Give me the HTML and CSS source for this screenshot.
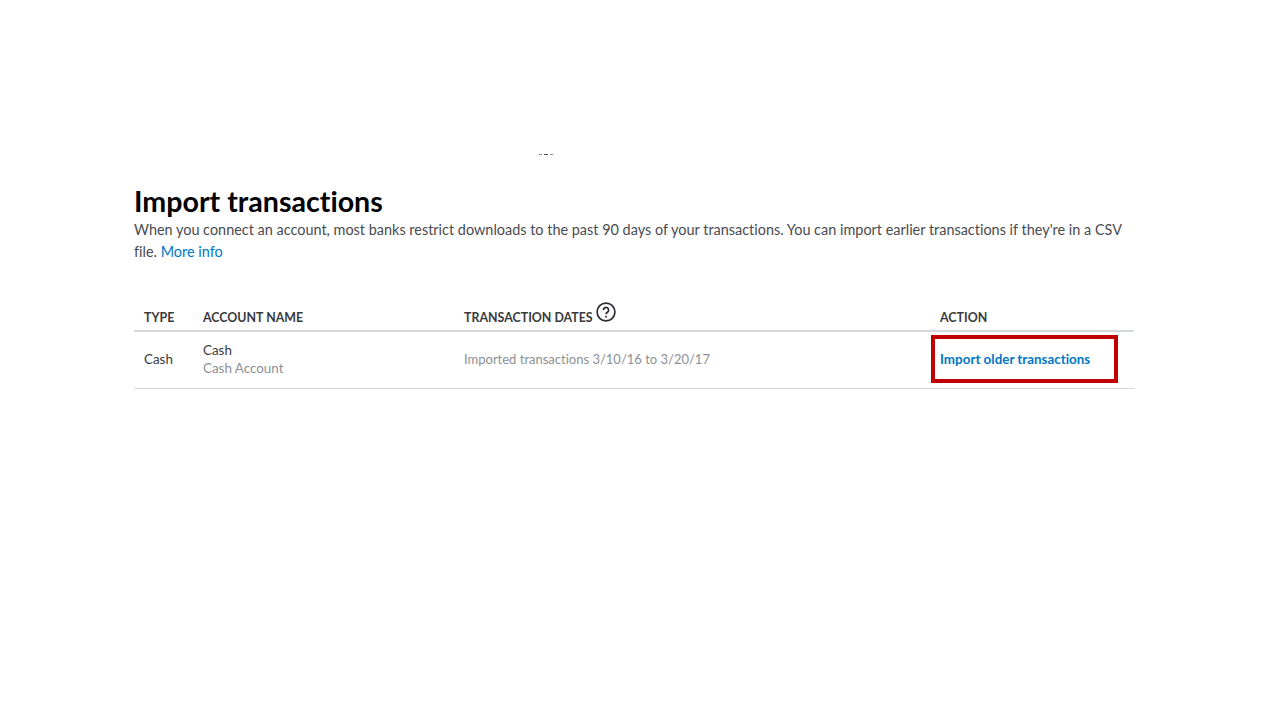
FILE: index.html
```html
<!DOCTYPE html>
<html lang="en">
<head>
<meta charset="utf-8">
<title>Import transactions</title>
<link rel="stylesheet" href="styles.css">
</head>
<body>
<main class="page">
  <div class="clipped" aria-hidden="true"><i class="tick"></i><i class="tick wide"></i><i class="tick"></i></div>
  <h1 class="title">Import transactions</h1>
  <p class="intro">When you connect an account, most banks restrict downloads to the past 90 days of your transactions. You can import earlier transactions if they're in a CSV file. <a class="link" href="#">More info</a></p>
  <div class="table">
    <div class="row head">
      <div class="cell">TYPE</div>
      <div class="cell">ACCOUNT NAME</div>
      <div class="cell dates">TRANSACTION DATES
        <svg class="help" viewBox="0 0 20 20" width="20" height="20" aria-hidden="true"><circle cx="10" cy="10" r="8.9" fill="none" stroke="#2b2d33" stroke-width="1.7"/><path d="M7.4 8a2.6 2.6 0 1 1 4 2.2c-.9.6-1.4 1-1.4 2.1" fill="none" stroke="#2b2d33" stroke-width="1.7"/><circle cx="10" cy="14.8" r="1" fill="#2b2d33"/></svg>
      </div>
      <div class="cell">ACTION</div>
    </div>
    <div class="row body">
      <div class="cell">Cash</div>
      <div class="cell stack"><span>Cash</span><span class="muted">Cash Account</span></div>
      <div class="cell muted range">Imported transactions 3/10/16 to 3/20/17</div>
      <div class="cell action"><a class="action-link" href="#">Import older transactions</a><span class="highlight"></span></div>
    </div>
  </div>
</main>
</body>
</html>
```
FILE: styles.css
```css
* { box-sizing: border-box; }
html, body { margin: 0; background: #fff; }
body { font-family: "Lato", "Open Sans", sans-serif; font-variant-ligatures: none; color: #393a3d; height: 720px; overflow: hidden; }
.page { width: 1000px; margin-left: 134px; padding-top: 154px; }
.clipped { display: flex; gap: 2px; height: 2px; margin-left: 405px; align-items: flex-start; }
.tick { display: block; width: 3px; height: 1px; background: #8b8d94; }
.tick.wide { width: 4px; background: #4a4c52; }
.title { margin: 27px 0 0; font-size: 28.6px; line-height: 36px; font-weight: 700; color: #000; }
.intro { margin: 0; font-size: 14.44px; line-height: 22px; color: #4a4b4f; width: 1000px; }
.link { color: #0077c5; text-decoration: none; }
.table { margin-top: 37px; font-size: 13.4px; }
.row { display: grid; grid-template-columns: 69px 261px 476px 194px; }
.cell { padding-left: 10px; }
.cell + .cell { padding-left: 0; }
.head { height: 32px; border-bottom: 2px solid #d4d7dc; font-weight: 700; color: #393a3d; align-items: end; padding-bottom: 3px; font-size: 12.4px; line-height: 18px; }
.dates { position: relative; }
.help { position: absolute; left: 132px; top: -7px; }
.body { height: 57px; border-bottom: 1px solid #d4d7dc; align-items: center; line-height: 18px; padding-bottom: 3px; }
.stack { display: flex; flex-direction: column; }
.muted { color: #8d9096; }
.range { font-size: 13px; }
.action { position: relative; align-self: stretch; display: flex; align-items: center; }
.action-link { color: #0077c5; font-weight: 700; text-decoration: none; font-size: 13.4px; }
.highlight { position: absolute; left: -9px; top: 3px; width: 187px; height: 48px; border: 4px solid #c00000; }
```
